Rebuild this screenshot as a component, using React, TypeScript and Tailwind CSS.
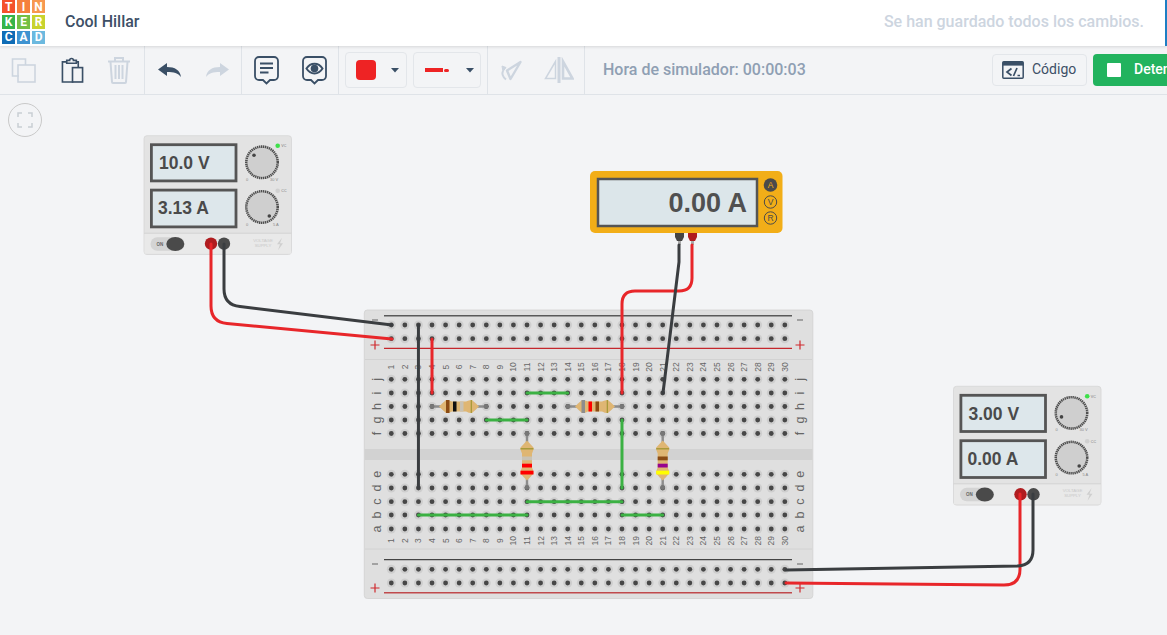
const tiles = [
  { c: "T", bg: "bg-[#f4512c]" },
  { c: "I", bg: "bg-[#f5803e]" },
  { c: "N", bg: "bg-[#f7984f]" },
  { c: "K", bg: "bg-[#36b44a]" },
  { c: "E", bg: "bg-[#74bf44]" },
  { c: "R", bg: "bg-[#c8d32e]" },
  { c: "C", bg: "bg-[#0f6cb6]" },
  { c: "A", bg: "bg-[#3f93d1]" },
  { c: "D", bg: "bg-[#6cb9df]" },
];

const navy = "#3a4f66";
const faded = "#cdd5df";

const colX = (n: number) => 391.3 + (n - 1) * 13.57;
const columns = Array.from({ length: 30 }, (_, i) => i + 1);

function Logo() {
  return (
    <div className="grid w-[43px] grid-cols-3 gap-[2px] self-start">
      {tiles.map((t) => (
        <div
          key={t.c}
          className={`flex h-[13.3px] w-[13.2px] items-center justify-center text-[12px] font-bold leading-none text-white ${t.bg}`}
        >
          {t.c}
        </div>
      ))}
    </div>
  );
}

function Sep() {
  return <div className="h-full w-px bg-[#dfe3e8]" />;
}

function Caret() {
  return (
    <svg width="8" height="5" viewBox="0 0 8 5">
      <path d="M0 0h8L4 4.500z" fill={navy} />
    </svg>
  );
}

function CopyIcon() {
  return (
    <svg width="26" height="26" viewBox="0 0 26 26" fill="none" stroke={faded} strokeWidth="1.6">
      <path d="M8 19H1.500V2H14.500V8" />
      <rect x="7" y="8" width="17" height="17" />
    </svg>
  );
}

function PasteIcon() {
  return (
    <svg width="23" height="26" viewBox="0 0 24 27" fill="none" stroke={navy} strokeWidth="1.7">
      <path d="M13 26H1.500V5H7" />
      <path d="M15 5h3v6" />
      <path d="M6 6.500V3.500h3a2 2 0 0 1 4 0h3v3z" fill="#f3f4f6" />
      <rect x="12" y="11" width="10.500" height="15" fill="#f3f4f6" />
    </svg>
  );
}

function TrashIcon() {
  return (
    <svg width="24" height="28" viewBox="0 0 24 28" fill="none" stroke={faded} strokeWidth="2">
      <path d="M1 5.500h22M8 5V2h8v3" />
      <path d="M3.500 6l1.500 20a1 1 0 0 0 1 1h12a1 1 0 0 0 1-1l1.500-20" />
      <path d="M8.500 9v14M12 9v14M15.500 9v14" />
    </svg>
  );
}

function ArrowIcon({ color, flip }: { color: string; flip?: boolean }) {
  return (
    <svg width="23" height="14" viewBox="0 0 23 14" className={flip ? "-scale-x-100" : ""}>
      <path d="M0 6.500L9 0v4c8 0 13 3 14 10-3-4-7-5-14-5v4z" fill={color} />
    </svg>
  );
}

function NoteIcon({ eye }: { eye?: boolean }) {
  return (
    <svg width="25" height="29" viewBox="0 0 25 29" fill="none" stroke={navy} strokeWidth="1.8">
      <path d="M5 1h15a4 4 0 0 1 4 4v15a4 4 0 0 1-4 4h-4l-3.500 3.500L9 24H5a4 4 0 0 1-4-4V5a4 4 0 0 1 4-4z" />
      {eye ? (
        <>
          <path d="M4.500 12.500c4-6.500 12-6.500 16 0-4 6.500-12 6.500-16 0z" strokeWidth="2" />
          <circle cx="12.500" cy="12.500" r="3.800" fill={navy} stroke="none" />
        </>
      ) : (
        <path d="M6 7.500h13M6 12h13M6 16.500h8.500" strokeWidth="2" />
      )}
    </svg>
  );
}

function RotateIcon() {
  return (
    <svg width="24" height="24" viewBox="0 0 24 24" fill="none" stroke={faded} strokeWidth="2.400">
      <path d="M21.500 4L8 12.500 11.500 21z" strokeLinejoin="round" />
      <path d="M4 13c-1.500 3 0 6 3 8.500" strokeWidth="2" />
      <path d="M3 8l4 1.500-3 4z" fill={faded} strokeWidth="1" />
    </svg>
  );
}

function MirrorIcon() {
  return (
    <svg width="30" height="26" viewBox="0 0 30 26" fill="none" stroke={faded} strokeWidth="1.500">
      <path d="M15 0v26" strokeWidth="3" />
      <path d="M11.500 4.500L1.500 21.500h10z" />
      <path d="M19 4.500l9.500 17H19z" strokeWidth="2.600" />
    </svg>
  );
}

function CodeIcon() {
  return (
    <svg width="22" height="18" viewBox="0 0 22 18">
      <rect x="0.800" y="0.800" width="20.400" height="16.400" fill="none" stroke={navy} strokeWidth="1.500" rx="1" />
      <rect x="0.800" y="0.800" width="20.400" height="3.800" fill={navy} />
      <path d="M9.500 7.500L5 11l4.500 3.500M11.500 15l3.500-8" fill="none" stroke={navy} strokeWidth="1.700" />
      <path d="M15.500 14.500h2.500" stroke={navy} strokeWidth="1.500" />
    </svg>
  );
}

function Hole({ x, y }: { x: number; y: number }) {
  return (
    <g>
      <circle cx={x} cy={y} r="4.500" fill="#cecece" />
      <circle cx={x} cy={y} r="2.400" fill="#474747" />
    </g>
  );
}

function VText({ x, y, t, size, color = "#666" }: { x: number; y: number; t: string; size: number; color?: string }) {
  return (
    <text
      x={x}
      y={y}
      fontSize={size}
      fill={color}
      textAnchor="middle"
      dominantBaseline="central"
      transform={`rotate(-90 ${x} ${y})`}
    >
      {t}
    </text>
  );
}

function Breadboard() {
  const topLetters = [
    { t: "j", y: 379.3 },
    { t: "i", y: 393 },
    { t: "h", y: 406.5 },
    { t: "g", y: 420 },
    { t: "f", y: 433.5 },
  ];
  const bottomLetters = [
    { t: "e", y: 474.3 },
    { t: "d", y: 488 },
    { t: "c", y: 501.7 },
    { t: "b", y: 515 },
    { t: "a", y: 529 },
  ];
  const rows = [325, 338.7, 379.3, 393, 406.5, 420, 433.5, 474.3, 488, 501.7, 515, 529, 569.3, 583];

  return (
    <g fontFamily="'Liberation Sans', sans-serif">
      <rect x="364.300" y="310" width="448.500" height="288.500" rx="3" fill="#dfdfdf" stroke="#d0d0d0" strokeWidth="0.800" />
      <rect x="364.700" y="449" width="447.700" height="11" fill="#d2d2d2" />
      <path d="M365 359.500H812M365 549H812" stroke="#d2d2d2" strokeWidth="1" />
      <path d="M384 315.700H792" stroke="#5a5a5a" strokeWidth="1.500" />
      <path d="M384 348.300H792" stroke="#c4282d" strokeWidth="1.300" />
      <path d="M384 559.700H792" stroke="#444" strokeWidth="1.300" />
      <path d="M384 592.700H792" stroke="#c04a4d" strokeWidth="1.500" />
      <path d="M372 320H378M797 320H803M372 564H378M797 564H803" stroke="#666" strokeWidth="1.200" />
      <path d="M370.500 345H379.500M375 340.500V349.500M795.500 345H804.500M800 340.500V349.500M370.500 588H379.500M375 583.500V592.500M795.500 588H804.500M800 583.500V592.500" stroke="#d0282d" strokeWidth="1.200" />
      {rows.map((y) => columns.map((n) => <Hole key={`${y}-${n}`} x={colX(n)} y={y} />))}
      {columns.map((n) => (
        <g key={n}>
          <VText x={colX(n)} y={367} t={String(n)} size={8.500} />
          <VText x={colX(n)} y={540.700} t={String(n)} size={8.500} />
        </g>
      ))}
      {[...topLetters, ...bottomLetters].map((l) => (
        <g key={l.t}>
          <VText x={376.700} y={l.y} t={l.t} size={12.500} />
          <VText x={800} y={l.y} t={l.t} size={12.500} />
        </g>
      ))}
    </g>
  );
}

function Resistor({
  x,
  y,
  vertical,
  bands,
}: {
  x: number;
  y: number;
  vertical?: boolean;
  bands: { at: number; w: number; color: string }[];
}) {
  return (
    <g transform={`translate(${x} ${y})${vertical ? " rotate(90)" : ""}`}>
      <path d="M-27 0H27" stroke="#8c8c8c" strokeWidth="2.400" strokeLinecap="round" />
      <circle cx="-27" cy="0" r="2.400" fill="#777" />
      <circle cx="27" cy="0" r="2.400" fill="#777" />
      <path
        d="M-20 0L-13 -6.500Q-11 -7 -7 -5H7Q11 -7 13 -6.500L20 0L13 6.500Q11 7 7 5H-7Q-11 7 -13 6.500z"
        fill="#dfb673"
      />
      {bands.map((b) => {
        const half = Math.abs(b.at + b.w / 2) > 9 ? 6.5 : 5;
        return <rect key={b.at} x={b.at} y={-half} width={b.w} height={half * 2} fill={b.color} />;
      })}
    </g>
  );
}

function Wire({ d, color }: { d: string; color: string }) {
  return <path d={d} fill="none" stroke={color} strokeWidth="3" strokeLinecap="round" strokeLinejoin="round" />;
}

function Knob({ x, y, dot }: { x: number; y: number; dot: [number, number] }) {
  return (
    <g>
      <circle cx={x} cy={y} r="15.600" fill="#cfcfcf" stroke="#4f4f4f" strokeWidth="2.800" strokeDasharray="1.400 0.600" />
      <circle cx={x} cy={y} r="14.400" fill="#cfcfcf" />
      <circle cx={x + dot[0]} cy={y + dot[1]} r="1.800" fill="#444" />
    </g>
  );
}

function Supply({ x, y, v, a, dotA, dotB }: { x: number; y: number; v: string; a: string; dotA: [number, number]; dotB: [number, number] }) {
  return (
    <g transform={`translate(${x} ${y})`} fontFamily="'Liberation Sans', sans-serif">
      <rect x="0" y="0" width="147.500" height="118.800" rx="3" fill="#e3e3e3" stroke="#d6d6d6" strokeWidth="0.800" />
      <rect x="0.500" y="97" width="146.500" height="21" fill="#e9e9e9" />
      <path d="M0 97.500H147.500" stroke="#d2d2d2" />
      <rect x="7.400" y="9" width="84.600" height="36.200" fill="#dde7eb" stroke="#555" strokeWidth="2.800" />
      <rect x="7.400" y="54.400" width="84.600" height="36.800" fill="#dde7eb" stroke="#555" strokeWidth="2.800" />
      <text x="15" y="33.600" fontSize="17.500" fontWeight="700" fill="#4a4a4a">{v}</text>
      <text x="14" y="78.300" fontSize="17.500" fontWeight="700" fill="#4a4a4a">{a}</text>
      <Knob x={118} y={26.600} dot={dotA} />
      <Knob x={118} y={71.300} dot={dotB} />
      <circle cx="133.700" cy="10" r="2.300" fill="#3ee04a" />
      <circle cx="133.700" cy="55" r="2.300" fill="#d0d0d0" />
      <text x="137.300" y="11.500" fontSize="3.600" fill="#777">VC</text>
      <text x="137.300" y="56.500" fontSize="3.600" fill="#777">CC</text>
      <text x="102" y="45" fontSize="4" fill="#888">0</text>
      <text x="126" y="45" fontSize="4" fill="#888">30 V</text>
      <text x="102" y="90" fontSize="4" fill="#888">0</text>
      <text x="129" y="90" fontSize="4" fill="#888">5 A</text>
      <rect x="6.500" y="101.500" width="34" height="13.500" rx="6.700" fill="#d4d4d4" />
      <text x="12.500" y="110" fontSize="4.500" fontWeight="700" fill="#666">ON</text>
      <ellipse cx="31.300" cy="108.300" rx="9" ry="7" fill="#4a4a4a" />
      <circle cx="67" cy="108" r="6.200" fill="#b01c1f" />
      <circle cx="80" cy="108" r="6.200" fill="#4a4a4a" />
      <text x="119" y="106" fontSize="4.300" fill="#c8c8c8" textAnchor="middle">VOLTAGE</text>
      <text x="119" y="111" fontSize="4.300" fill="#c8c8c8" textAnchor="middle">SUPPLY</text>
      <path d="M138 102l-5 6.500h3l-2 6 5-7h-3z" fill="#cfcfcf" />
    </g>
  );
}

function Meter() {
  return (
    <g fontFamily="'Liberation Sans', sans-serif">
      <rect x="590" y="171" width="192.500" height="62" rx="5" fill="#f2ae18" />
      <rect x="598" y="179" width="159" height="47" fill="#dce6ea" stroke="#555" strokeWidth="2.500" />
      <text x="747" y="211.500" fontSize="27" fontWeight="700" fill="#505050" textAnchor="end">0.00 A</text>
      <circle cx="770.500" cy="185" r="6.800" fill="#4a4a4a" />
      <text x="770.500" y="188" fontSize="8.500" fill="#f2ae18" textAnchor="middle">A</text>
      <circle cx="770.500" cy="202" r="6.200" fill="none" stroke="#4a4a4a" strokeWidth="1" />
      <text x="770.500" y="205" fontSize="8.500" fill="#4a4a4a" textAnchor="middle">V</text>
      <circle cx="770.500" cy="218" r="6.200" fill="none" stroke="#4a4a4a" strokeWidth="1" />
      <text x="770.500" y="221" fontSize="8.500" fill="#4a4a4a" textAnchor="middle">R</text>
      <path d="M675 233h9v4l-2 4h-5l-2-4z" fill="#444" />
      <path d="M688 233h9v4l-2 4h-5l-2-4z" fill="#b01c1f" />
      <rect x="678" y="241" width="3" height="4" fill="#aaa" />
      <rect x="691" y="241" width="3" height="4" fill="#aaa" />
    </g>
  );
}

function Circuit() {
  const red = "#e8262a";
  const green = "#3bb143";
  const black = "#3a3d40";
  return (
    <svg className="absolute inset-0 h-full w-full" viewBox="0 95 1167 540">
      <Breadboard />

      <Wire d={`M${colX(3)} 325V488`} color={black} />
      <Wire d={`M${colX(4)} 339V393`} color={red} />
      <Wire d={`M${colX(11)} 393H${colX(14)}`} color={green} />
      <Wire d={`M${colX(8)} 420H${colX(11)}`} color={green} />
      <Wire d={`M${colX(11)} 501.700H${colX(18)}`} color={green} />
      <Wire d={`M${colX(3)} 515H${colX(11)}`} color={green} />
      <Wire d={`M${colX(18)} 420V488`} color={green} />
      <Wire d={`M${colX(18)} 515H${colX(21)}`} color={green} />

      <Resistor
        x={459}
        y={406.500}
        bands={[
          { at: -13, w: 3.500, color: "#8a4b14" },
          { at: -6, w: 3.500, color: "#111" },
          { at: 1, w: 3.500, color: "#c9c2b4" },
          { at: 11.700, w: 1.300, color: "#a89a3a" },
        ]}
      />
      <Resistor
        x={595}
        y={406.500}
        bands={[
          { at: -13.500, w: 3.500, color: "#8d8d8d" },
          { at: -6.500, w: 3.500, color: "#ff0000" },
          { at: 0.500, w: 3.500, color: "#8a4b14" },
          { at: 11.700, w: 1.300, color: "#a89a3a" },
        ]}
      />
      <Resistor
        x={colX(11)}
        y={460.500}
        vertical
        bands={[
          { at: -12.500, w: 1.500, color: "#a89a3a" },
          { at: -4, w: 3.800, color: "#c9c2b4" },
          { at: 3.200, w: 3.800, color: "#ff0000" },
          { at: 10.200, w: 3.800, color: "#ff0000" },
        ]}
      />
      <Resistor
        x={colX(21)}
        y={460.500}
        vertical
        bands={[
          { at: -12.500, w: 1.500, color: "#a89a3a" },
          { at: -4, w: 3.800, color: "#8a4b14" },
          { at: 3.200, w: 3.800, color: "#96048e" },
          { at: 10.200, w: 3.800, color: "#ffff00" },
        ]}
      />

      <Supply x={144} y={135.700} v="10.0 V" a="3.13 A" dotA={[-8, -7]} dotB={[7.300, 9]} />
      <Supply x={953.500} y={386.300} v="3.00 V" a="0.00 A" dotA={[-10, 4]} dotB={[7.700, 8.400]} />
      <Meter />

      <Wire d={`M211 244V306Q211 322 227 323.500L392 339`} color={red} />
      <Wire d={`M224 244V289Q224 305 240 306.500L392 325`} color={black} />
      <Wire d={`M692 245V278Q692 291 679 291H635Q622 291 622 304V393`} color={red} />
      <Wire d={`M679 245V262L663 393`} color={black} />
      <Wire d={`M1020 494V569Q1020 585 1004 585L786 583`} color={red} />
      <Wire d={`M1033 494V550Q1033 565 1018 566L786 570`} color={black} />
    </svg>
  );
}

export default function App() {
  return (
    <div className="relative flex h-[635px] w-[1167px] flex-col overflow-hidden bg-[#f3f4f6] font-['Roboto',sans-serif]">
      <header className="relative z-10 flex h-[46px] shrink-0 items-center bg-white pl-[2px] shadow-[0_1px_3px_rgba(0,0,0,0.12)]">
        <Logo />
        <h1 className="ml-5 pb-[2px] text-[16px] font-medium text-[#3d4f66]">Cool Hillar</h1>
        <span className="ml-auto mr-[23px] pb-[2px] text-[16px] font-medium text-[#cdd5df]">
          Se han guardado todos los cambios.
        </span>
        <div className="absolute right-0 top-0 h-full w-[2px] bg-[#1d7fc4]" />
      </header>

      <div className="flex h-[49px] shrink-0 items-center border-b border-[#dfe3e8]">
        <div className="flex h-full w-[144px] items-center justify-between pl-[11px] pr-[13px]">
          <CopyIcon />
          <PasteIcon />
          <TrashIcon />
        </div>
        <Sep />
        <div className="flex h-full w-[96px] items-center justify-around">
          <ArrowIcon color={navy} />
          <ArrowIcon color={faded} flip />
        </div>
        <Sep />
        <div className="flex h-full w-[96px] items-center justify-around">
          <NoteIcon />
          <NoteIcon eye />
        </div>
        <Sep />
        <div className="flex h-full w-[148px] items-center gap-[6px] pl-[6px]">
          <button className="flex h-9 w-[62px] items-center justify-between rounded border border-[#e3e6ea] pl-[10px] pr-[7px]">
            <span className="h-5 w-5 rounded bg-[#ee2324]" />
            <Caret />
          </button>
          <button className="flex h-9 w-[68px] items-center justify-between rounded border border-[#e3e6ea] pl-[11px] pr-[6px]">
            <span className="flex items-center gap-[1px]">
              <span className="h-[4px] w-[18px] bg-[#ee2324]" />
              <span className="h-[3px] w-[5px] rounded-sm bg-[#ee2324]" />
            </span>
            <Caret />
          </button>
        </div>
        <Sep />
        <div className="flex h-full w-[96px] items-center justify-around pl-[1px]">
          <RotateIcon />
          <MirrorIcon />
        </div>
        <Sep />
        <span className="ml-[18px] text-[16px] font-medium text-[#8f9fb3]">Hora de simulador: 00:00:03</span>
        <button className="ml-auto flex h-8 w-[95px] items-center gap-2 rounded border border-[#e3e6ea] pl-[9px] text-[14px] text-[#3d4f66]">
          <CodeIcon />
          <span className="pb-[2px]">Código</span>
        </button>
        <button className="ml-[6px] flex h-8 w-[74px] items-center gap-[13px] overflow-hidden whitespace-nowrap rounded-l bg-[#22b35e] pl-[14px] text-[14px] font-medium text-white">
          <span className="h-[14px] w-[14px] shrink-0 rounded-[1px] bg-white" />
          <span className="pb-[2px]">Detener</span>
        </button>
      </div>

      <main className="relative flex-1">
        <Circuit />
        <button className="absolute left-2 top-2 flex h-[34px] w-[34px] items-center justify-center rounded-full border border-[#c9c9c9]">
          <svg width="16" height="16" viewBox="0 0 16 16" fill="none" stroke="#c9ced4" strokeWidth="1.500">
            <path d="M1 5V1H5M11 1H15V5M15 11V15H11M5 15H1V11" />
          </svg>
        </button>
      </main>
    </div>
  );
}
